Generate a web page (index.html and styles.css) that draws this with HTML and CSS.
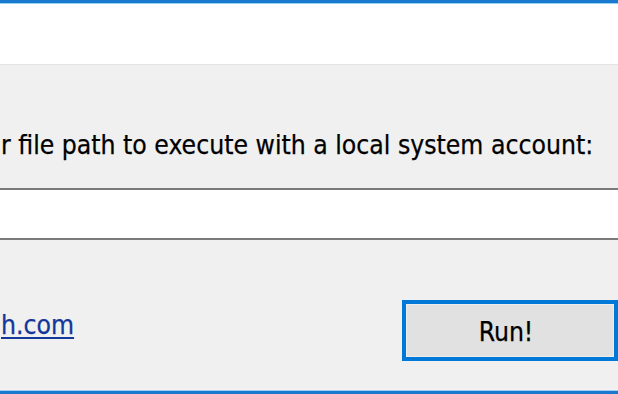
FILE: index.html
```html
<!DOCTYPE html>
<html lang="en">
<head>
  <meta charset="UTF-8">
  <meta name="viewport" content="width=device-width, initial-scale=1.0">
  <title>Run as system</title>
  <link rel="stylesheet" href="styles.css">
</head>
<body>
  <div class="window">
    <!-- white header strip under the title bar -->
    <div class="header"></div>

    <div class="content">
      <p class="prompt">r file path to execute with a local system account:</p>
      <input class="path" type="text">
      <div class="actions">
        <a class="site" href="#">h.com</a>
        <button class="run" type="button">Run!</button>
      </div>
    </div>

    <div class="bottom-edge"></div>
  </div>
</body>
</html>
```

FILE: styles.css
```css
html, body{
  margin: 0;
  padding: 0;
}
body{
  width: 618px;
  height: 394px;
  overflow: hidden;
  background: #f0f0f0;
  font-family: "DejaVu Sans Condensed", "DejaVu Sans", sans-serif;
  font-size: 26.3px;
  color: #000;
  -webkit-text-stroke: 0.25px;
}
.window{
  height: 394px;
  display: flex;
  flex-direction: column;
}
.header{
  height: 61px;
  border-top: 3px solid #1a78cf;
  border-bottom: 1px solid #e4e4e4;
  background: linear-gradient(#93d2f5 0 1px, #fff 1px);
}
.content{
  flex: 1;
  padding-left: 1px;
}
.prompt{
  margin: 64px 0 0;
  line-height: 32px;
  white-space: nowrap;
}
/* the edit box runs past both edges of the crop */
.path{
  display: block;
  box-sizing: border-box;
  width: calc(100% + 20px);
  height: 52px;
  margin: 27px 0 0 -10px;
  border: 2px solid #7a7a7a;
  background: #fff;
  outline: none;
}
.actions{
  display: flex;
  justify-content: space-between;
  align-items: flex-start;
  margin-top: 60px;
}
.site{
  margin-top: 9px;
  line-height: 32px;
  color: #13379a;
  text-decoration: underline;
  text-decoration-thickness: 2px;
  text-underline-offset: 3px;
}
.run{
  box-sizing: border-box;
  width: 216px;
  height: 61px;
  padding: 3px 8px 0 0;
  border: 4px solid #0078d7;
  background: #e1e1e1;
  box-shadow: inset 0 0 0 1px #ececec;
  font-family: inherit;
  font-size: 26.3px;
  line-height: 32px;
  color: #000;
}
.bottom-edge{
  height: 7px;
  background: linear-gradient(#f0f0f0 0 1px, #f6f0f2 1px 3px, #9fd0f2 3px 4px, #1a78cf 4px);
}
```
